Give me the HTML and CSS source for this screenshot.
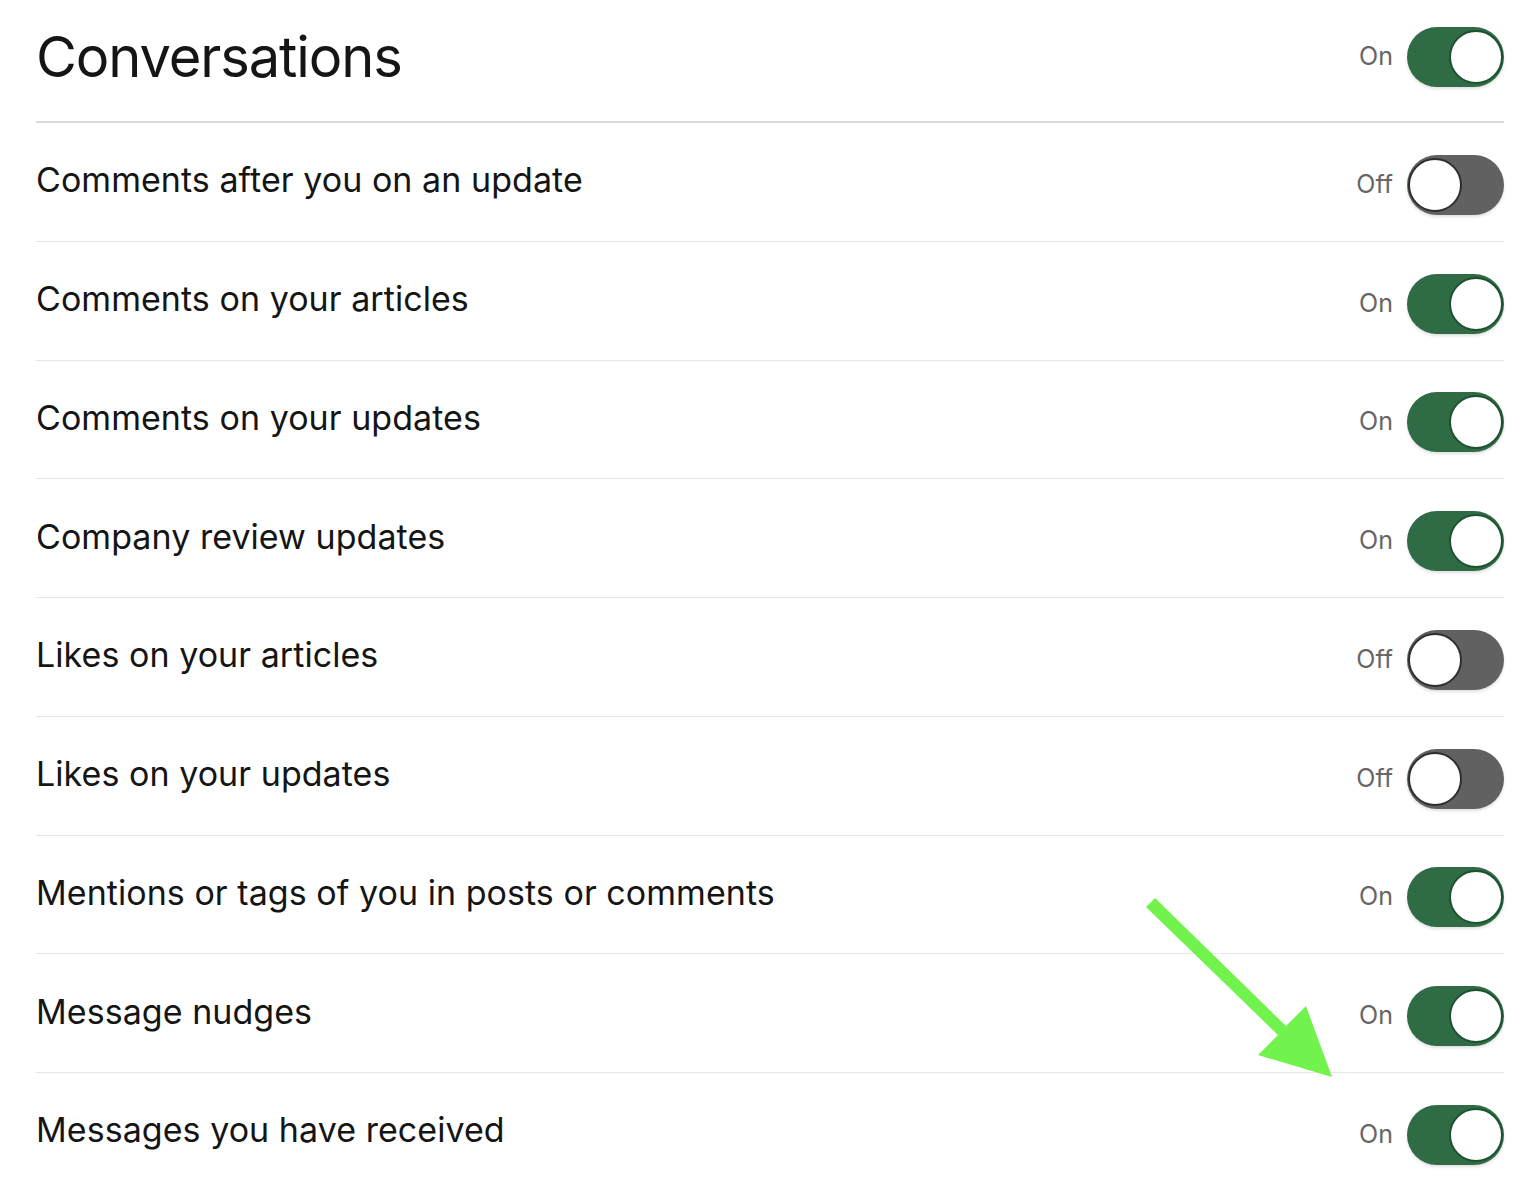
FILE: index.html
```html
<!DOCTYPE html>
<html lang="en">
<head>
<meta charset="utf-8">
<title>Conversations</title>
<link rel="stylesheet" href="styles.css">
</head>
<body>
<main class="page">
  <header class="head">
    <h1 class="title">Conversations</h1>
    <div class="ctl"><span class="state">On</span><span class="toggle on"><span class="knob"></span></span></div>
  </header>
  <ul class="list">
    <li class="row"><span class="label">Comments after you on an update</span><div class="ctl"><span class="state">Off</span><span class="toggle off"><span class="knob"></span></span></div></li>
    <li class="row"><span class="label">Comments on your articles</span><div class="ctl"><span class="state">On</span><span class="toggle on"><span class="knob"></span></span></div></li>
    <li class="row"><span class="label">Comments on your updates</span><div class="ctl"><span class="state">On</span><span class="toggle on"><span class="knob"></span></span></div></li>
    <li class="row"><span class="label">Company review updates</span><div class="ctl"><span class="state">On</span><span class="toggle on"><span class="knob"></span></span></div></li>
    <li class="row"><span class="label">Likes on your articles</span><div class="ctl"><span class="state">Off</span><span class="toggle off"><span class="knob"></span></span></div></li>
    <li class="row"><span class="label">Likes on your updates</span><div class="ctl"><span class="state">Off</span><span class="toggle off"><span class="knob"></span></span></div></li>
    <li class="row"><span class="label">Mentions or tags of you in posts or comments</span><div class="ctl"><span class="state">On</span><span class="toggle on"><span class="knob"></span></span></div></li>
    <li class="row"><span class="label">Message nudges</span><div class="ctl"><span class="state">On</span><span class="toggle on"><span class="knob"></span></span></div></li>
    <li class="row"><span class="label">Messages you have received</span><div class="ctl"><span class="state">On</span><span class="toggle on"><span class="knob"></span></span></div></li>
  </ul>
  <svg class="arrow" viewBox="0 0 1536 1189" aria-hidden="true">
    <polygon points="1146,907 1155,898 1286,1026 1306,1006 1332,1077 1258,1055 1278,1035" fill="#72f24c"/>
  </svg>
</main>
</body>
</html>
```

FILE: styles.css
```css
html, body {
  margin: 0;
  padding: 0;
  background: #ffffff;
}

body {
  font-family: Inter, "Liberation Sans", Arial, sans-serif;
  color: #151515;
  overflow: hidden;
}

.page {
  position: relative;
  width: 1536px;
  height: 1189px;
  padding: 0 32px 0 36px;
  box-sizing: border-box;
}

.head {
  display: flex;
  align-items: center;
  justify-content: space-between;
  height: 123px;
  box-sizing: border-box;
  padding-bottom: 8px;
  border-bottom: 2px solid #dadada;
}

.title {
  margin: 0;
  font-size: 56px;
  font-weight: 400;
  letter-spacing: -1.1px;
  color: #151515;
}

.list {
  list-style: none;
  margin: 0;
  padding: 0;
}

.row {
  display: flex;
  align-items: center;
  justify-content: space-between;
  height: 118.75px;
  box-sizing: border-box;
  border-bottom: 1.5px solid #e6e6e6;
}

.label {
  font-size: 34px;
  letter-spacing: 0.05px;
  color: #151515;
  margin-top: -4px;
}

.ctl {
  display: flex;
  align-items: center;
  gap: 14px;
}

.row .ctl {
  margin-top: 6px;
}

.state {
  font-size: 25px;
  color: #666666;
  margin-top: -2px;
}

.toggle {
  position: relative;
  display: block;
  width: 97px;
  height: 60px;
  border-radius: 30px;
  box-shadow: 0 2px 3px rgba(0, 0, 0, 0.12);
}

.toggle.on {
  background: #2f6b45;
}

.toggle.off {
  background: #616161;
}

.knob {
  position: absolute;
  top: 3px;
  width: 50px;
  height: 50px;
  border-radius: 50%;
  background: #ffffff;
  box-sizing: content-box;
}

.toggle.on .knob {
  right: 1px;
  border: 2px solid #1f5030;
}

.toggle.off .knob {
  left: 1px;
  border: 2px solid #2e2e2e;
}

.arrow {
  position: absolute;
  left: 0;
  top: 0;
  width: 1536px;
  height: 1189px;
  pointer-events: none;
}
```
